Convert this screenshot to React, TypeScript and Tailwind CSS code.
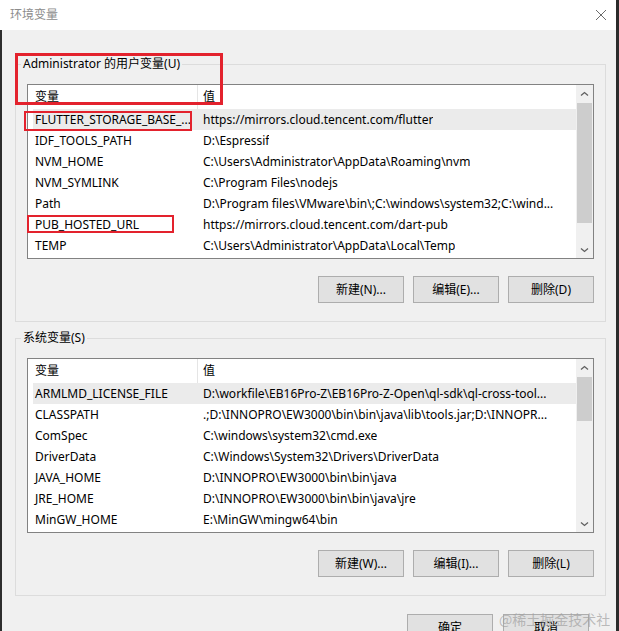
import React from 'react'

type Row = [string, string]

const userVars: Row[] = [
  ['FLUTTER_STORAGE_BASE_...', 'https://mirrors.cloud.tencent.com/flutter'],
  ['IDF_TOOLS_PATH', 'D:\\Espressif'],
  ['NVM_HOME', 'C:\\Users\\Administrator\\AppData\\Roaming\\nvm'],
  ['NVM_SYMLINK', 'C:\\Program Files\\nodejs'],
  ['Path', 'D:\\Program files\\VMware\\bin\\;C:\\windows\\system32;C:\\wind...'],
  ['PUB_HOSTED_URL', 'https://mirrors.cloud.tencent.com/dart-pub'],
  ['TEMP', 'C:\\Users\\Administrator\\AppData\\Local\\Temp'],
]

const sysVars: Row[] = [
  ['ARMLMD_LICENSE_FILE', 'D:\\workfile\\EB16Pro-Z\\EB16Pro-Z-Open\\ql-sdk\\ql-cross-tool...'],
  ['CLASSPATH', '.;D:\\INNOPRO\\EW3000\\bin\\bin\\java\\lib\\tools.jar;D:\\INNOPR...'],
  ['ComSpec', 'C:\\windows\\system32\\cmd.exe'],
  ['DriverData', 'C:\\Windows\\System32\\Drivers\\DriverData'],
  ['JAVA_HOME', 'D:\\INNOPRO\\EW3000\\bin\\bin\\java'],
  ['JRE_HOME', 'D:\\INNOPRO\\EW3000\\bin\\bin\\java\\jre'],
  ['MinGW_HOME', 'E:\\MinGW\\mingw64\\bin'],
]

function Chevron({ down }: { down?: boolean }) {
  return (
    <div className="h-[17px] flex items-center justify-center">
      <svg width="9" height="6" viewBox="0 0 9 6">
        <path
          d={down ? 'M1 1.5 L4.5 4.5 L8 1.5' : 'M1 4.5 L4.5 1.5 L8 4.5'}
          fill="none"
          stroke="#606060"
          strokeWidth="1.3"
        />
      </svg>
    </div>
  )
}

function Scrollbar({ thumbTop, thumbHeight }: { thumbTop: string; thumbHeight: string }) {
  return (
    <div className="w-[17px] shrink-0 flex flex-col bg-[#f0f0f0]">
      <Chevron />
      <div className="flex-1">
        <div className={`mx-[1px] bg-[#cdcdcd] ${thumbTop} ${thumbHeight}`} />
      </div>
      <Chevron down />
    </div>
  )
}

function VarList({ rows, thumbHeight }: { rows: Row[]; thumbHeight: string }) {
  return (
    <div className="flex h-[175px] border border-[#828282] bg-white overflow-hidden">
      <div className="flex-1 min-w-0">
        {/* header */}
        <div className="flex h-[24px]">
          <div className="w-[170px] shrink-0 pl-[7px] flex items-center border-r border-[#e5e5e5]">变量</div>
          <div className="pl-[5px] flex items-center">值</div>
        </div>
        {rows.map(([name, value], i) => (
          <div
            key={name}
            className={`ml-[5px] flex h-[21px] items-center ${i === 0 ? 'bg-[#ebebeb]' : ''}`}
          >
            <div className="w-[165px] shrink-0 pl-[2px] whitespace-nowrap overflow-hidden">{name}</div>
            <div className="pl-[5px] whitespace-nowrap overflow-hidden">{value}</div>
          </div>
        ))}
      </div>
      <Scrollbar thumbTop="mt-[1px]" thumbHeight={thumbHeight} />
    </div>
  )
}

function Button({ label }: { label: string }) {
  return (
    <div className="w-[86px] h-[27px] flex items-center justify-center border border-[#adadad] bg-[#e1e1e1]">
      {label}
    </div>
  )
}

function Group({
  title,
  rows,
  thumbHeight,
  buttons,
  className,
}: {
  title: string
  rows: Row[]
  thumbHeight: string
  buttons: string[]
  className: string
}) {
  return (
    <fieldset className={`border border-[#dcdcdc] px-[11px] pb-[18px] ${className}`}>
      <legend className="-ml-[6px] px-[2px] leading-[16px]">{title}</legend>
      <div className="mt-[12px]">
        <VarList rows={rows} thumbHeight={thumbHeight} />
      </div>
      <div className="mt-[17px] flex justify-end gap-[9px]">
        {buttons.map((b) => (
          <Button key={b} label={b} />
        ))}
      </div>
    </fieldset>
  )
}

export default function App() {
  return (
    <div className="relative w-[619px] h-[631px] overflow-hidden flex flex-col bg-[#f0f0f0] border-r-[3px] border-[#2b2b2b] text-[12px] text-black font-['Noto_Sans','Noto_Sans_CJK_SC',sans-serif]">
      {/* title bar */}
      <div className="h-[30px] shrink-0 bg-white flex items-center justify-between pl-[10px] pr-[9px]">
        <span className="text-[#8c8c8c] text-[12px]">环境变量</span>
        <svg width="12" height="12" viewBox="0 0 12 12">
          <path d="M1 1 L11 11 M11 1 L1 11" stroke="#6b6b6b" strokeWidth="1" />
        </svg>
      </div>

      {/* body */}
      <div className="flex-1 flex flex-col border-l-2 border-[#2d2d2d] pl-[13px] pr-[10px]">
        <Group
          title="Administrator 的用户变量(U)"
          rows={userVars}
          thumbHeight="h-[120px]"
          buttons={['新建(N)...', '编辑(E)...', '删除(D)']}
          className="mt-[26px]"
        />
        <Group
          title="系统变量(S)"
          rows={sysVars}
          thumbHeight="h-[44px]"
          buttons={['新建(W)...', '编辑(I)...', '删除(L)']}
          className="mt-[8px]"
        />
        <div className="mt-[18px] flex justify-end gap-[10px] pr-[17px]">
          <Button label="确定" />
          <Button label="取消" />
        </div>
      </div>

      {/* red annotation boxes */}
      <div className="absolute left-[15px] top-[53px] w-[208px] h-[52px] border-[3px] border-[#e3222d]" />
      <div className="absolute left-[24px] top-[111px] w-[168px] h-[20px] border-2 border-[#e3222d]" />
      <div className="absolute left-[27px] top-[215px] w-[147px] h-[18px] border-2 border-[#e3222d]" />

      {/* watermark */}
      <div className="absolute left-[499px] top-[610px] text-[14px] leading-[18px] text-[#a0a0a0]/70 font-['Noto_Sans_CJK_SC',sans-serif]">
        @稀土掘金技术社区
      </div>
    </div>
  )
}
